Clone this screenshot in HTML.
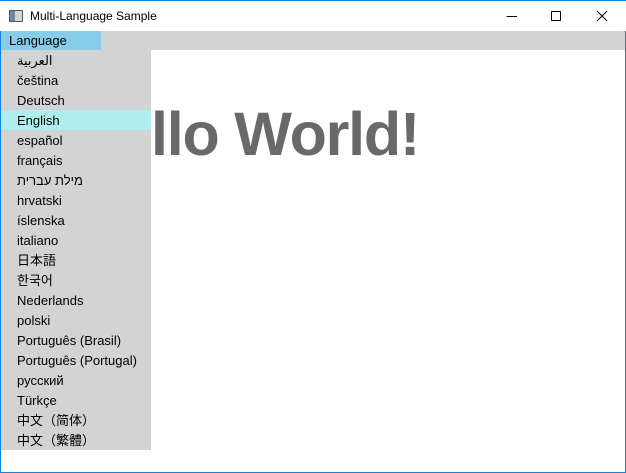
<!DOCTYPE html>
<html><head><meta charset="utf-8"><style>
*{margin:0;padding:0;box-sizing:border-box}
body{width:626px;height:473px;overflow:hidden;background:#fff;font-family:"Liberation Sans","Noto Sans CJK JP",sans-serif;position:relative}
.win{position:absolute;left:0;top:0;width:626px;height:473px;border:1px solid #1883d7;border-top:none}
.title{position:absolute;left:0;top:0;width:626px;height:31px;background:#fff;border-top:1px solid #1883d7}
.title .t{position:absolute;left:30px;top:8px;font-size:12px;color:#000}
.icon{position:absolute;left:9px;top:9px;width:14px;height:12px;border:1px solid #555;background:linear-gradient(90deg,#6a8a9a 0 40%,#cfd8dc 40%)}
.menubar{position:absolute;left:1px;top:31px;width:624px;height:19px;background:#d3d3d3}
.lang{position:absolute;left:1px;top:31px;width:100px;height:19px;background:#87ceeb;font-size:13px;padding:2px 0 0 8px}
.drop{position:absolute;left:1px;top:50px;width:150px;height:400px;background:#d3d3d3}
.drop div{height:20px;font-size:13px;line-height:20px;padding-top:1px;padding-left:16px;color:#000}
.drop .sel{background:#afeeee}
.hello{position:absolute;left:151px;top:104px;font-size:61px;line-height:61px;font-weight:bold;color:#696969;letter-spacing:-1.2px;white-space:nowrap}
</style></head><body>
<div class="hello">llo World!</div>
<div class="win"></div>
<div class="title"><div class="icon"></div><div class="t">Multi-Language Sample</div>
<svg style="position:absolute;left:480px;top:0" width="146" height="31"><path d="M26.5 15.5H37" stroke="#000"/><rect x="71.5" y="10.5" width="9" height="9" fill="none" stroke="#000"/><path d="M117 10L127 20M127 10L117 20" stroke="#000"/></svg></div>
<div class="menubar"></div>
<div class="lang">Language</div>
<div class="drop">
<div>العربية</div><div>čeština</div><div>Deutsch</div><div class="sel">English</div><div>español</div><div>français</div><div>מילת עברית</div><div>hrvatski</div><div>íslenska</div><div>italiano</div><div>日本語</div><div>한국어</div><div>Nederlands</div><div>polski</div><div>Português (Brasil)</div><div>Português (Portugal)</div><div>русский</div><div>Türkçe</div><div>中文（简体）</div><div>中文（繁體）</div>
</div>
</body></html>
